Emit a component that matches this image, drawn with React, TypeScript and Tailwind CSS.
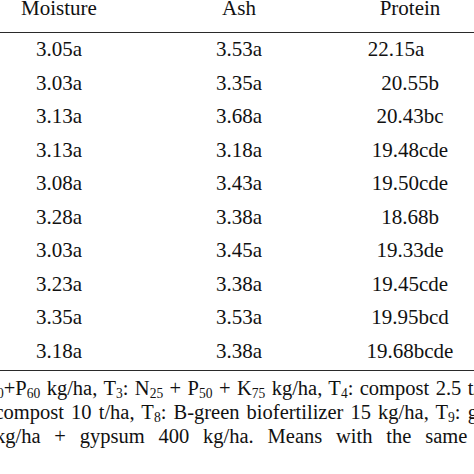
import React from 'react';

const ROWS: [string, string, string][] = [
  ['3.05a', '3.53a', '22.15a'],
  ['3.03a', '3.35a', '20.55b'],
  ['3.13a', '3.68a', '20.43bc'],
  ['3.13a', '3.18a', '19.48cde'],
  ['3.08a', '3.43a', '19.50cde'],
  ['3.28a', '3.38a', '18.68b'],
  ['3.03a', '3.45a', '19.33de'],
  ['3.23a', '3.38a', '19.45cde'],
  ['3.35a', '3.53a', '19.95bcd'],
  ['3.18a', '3.38a', '19.68bcde'],
];

const Sub: React.FC<{ children: React.ReactNode }> = ({ children }) => (
  <sub className="text-[0.66em] relative -bottom-[0.2em] leading-none">{children}</sub>
);

const App: React.FC = () => {
  return (
    <div
      className="w-[474px] h-[474px] overflow-hidden bg-white text-[#111]"
      style={{ fontFamily: '"Liberation Serif", "Times New Roman", serif' }}
    >
      {/* header */}
      <div className="grid grid-cols-[118px_242px_100px] h-[32px] text-[21px] leading-[16.4px] text-center">
        <div>Moisture</div>
        <div>Ash</div>
        <div>Protein</div>
      </div>

      <div className="border-t-[1.5px] border-b-[1.5px] border-[#2a2a2a] pb-[2px]">
        {ROWS.map((r, idx) => (
          <div key={idx} className="grid grid-cols-[118px_242px_100px] h-[33.5px] text-[21px] leading-[33.5px] text-center">
            <div>{r[0]}</div>
            <div>{r[1]}</div>
            <div className={idx === 0 ? 'pr-[28px]' : ''}>{r[2]}</div>
          </div>
        ))}
      </div>

      {/* footnote */}
      <div className="pt-[4.9px] text-[20.5px] leading-[24.3px] whitespace-nowrap overflow-hidden">
        <div className="-ml-[3px] [word-spacing:1.3px]">
          <Sub>0</Sub>+P<Sub>60</Sub> kg/ha, T<Sub>3</Sub>: N<Sub>25</Sub> + P<Sub>50</Sub> + K<Sub>75</Sub> kg/ha, T<Sub>4</Sub>: compost 2.5 t/ha
        </div>
        <div className="-ml-[5.5px] [word-spacing:2px]">
          compost 10 t/ha, T<Sub>8</Sub>: B-green biofertilizer 15 kg/ha, T<Sub>9</Sub>: gypsum
        </div>
        <div className="-ml-[5px] [word-spacing:8.7px]">
          kg/ha + gypsum 400 kg/ha. Means with the same letter
        </div>
      </div>
    </div>
  );
};

export default App;
